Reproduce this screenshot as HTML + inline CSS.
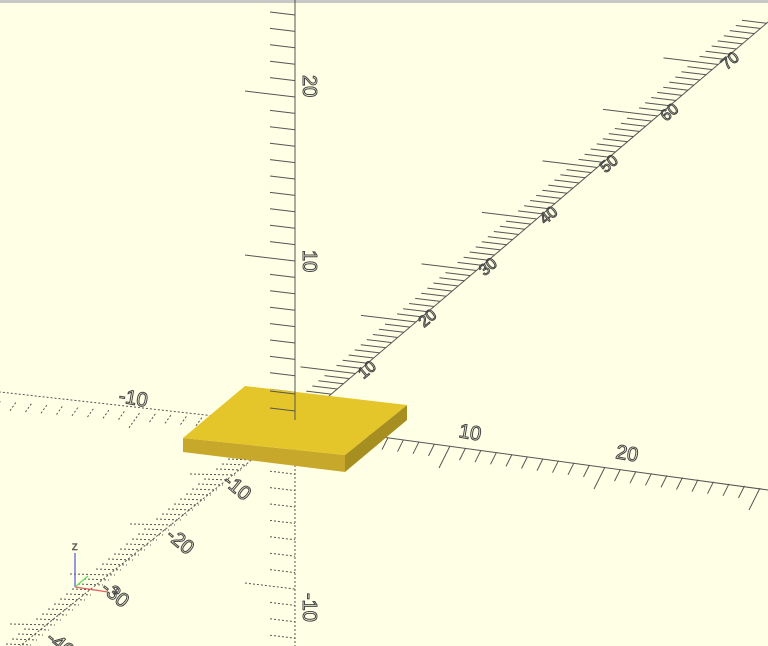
<!DOCTYPE html>
<html><head><meta charset="utf-8"><style>
html,body{margin:0;padding:0;background:#ffffe5;width:768px;height:646px;overflow:hidden}
svg{display:block}
text{font-family:"Liberation Sans",sans-serif;fill:none;stroke:#444;stroke-width:1}
</style></head><body>
<svg id="s" width="768" height="646" viewBox="0 0 768 646" xmlns="http://www.w3.org/2000/svg">
<rect width="768" height="646" fill="#ffffe5"/>
<rect width="768" height="3" fill="#c8c8c8"/>
<g id="ax" stroke="#555" stroke-width="1" fill="none"></g>
<g id="lb"></g>
<polygon points="183,438 345,455 345,472 183,452" fill="#c8a82a"/>
<polygon points="345,455 407,405 407,420 345,472" fill="#a68f20"/>
<polygon points="183,438 245,386 407,405 345,455" fill="#e5c62a"/>
<g stroke="#555" fill="none"><line x1="295" y1="386" x2="295" y2="420"/><line x1="270" y1="391" x2="295" y2="394"/><line x1="270" y1="408" x2="295" y2="411"/></g>
<g stroke-width="1.3">
<line x1="75" y1="587" x2="75" y2="553" stroke="#6060e0"/>
<line x1="75" y1="587" x2="88" y2="576" stroke="#60e060"/>
<line x1="75" y1="587" x2="108" y2="592" stroke="#e06060"/>
</g>
<text x="72" y="550" style="font-size:9px;stroke-width:.6">Z</text>
<text x="113" y="594" style="font-size:8px;stroke-width:.6">X</text>
</svg>
<script>
var NS="http://www.w3.org/2000/svg",ax=document.getElementById('ax'),lb=document.getElementById('lb');
function L(x1,y1,x2,y2,d){var l=document.createElementNS(NS,'line');l.setAttribute('x1',x1);l.setAttribute('y1',y1);l.setAttribute('x2',x2);l.setAttribute('y2',y2);if(d)l.setAttribute('stroke-dasharray','2,2');ax.appendChild(l);}
function T(x,y,r,s,f){var t=document.createElementNS(NS,'text');t.setAttribute('transform','translate('+x+','+y+') rotate('+r+')');t.setAttribute('style','font-size:'+(f||20)+'px');t.textContent=s;lb.appendChild(t);}
// Z axis
L(295,0,295,425);L(295,425,295,646,1);
for(var i=1;i<26;i++){var y=425-i*16.4,len=(i%10==0)?50:25;L(295-len,y-len*0.12,295,y);}
for(var i=1;i<14;i++){var y=425+i*16.4,len=(i%10==0)?50:25;L(295-len,y-len*0.12,295,y,1);}
// X axis
var xd=[15.5,2.1];
L(295,425,768,490);L(295,425,0,392,1);
for(var i=1;i<31;i++){var x=295+i*xd[0],y=425+i*xd[1];if(x<380)continue;var len=(i%10==0)?22:12;L(x-len*0.5,y+len,x,y);}
for(var i=1;i<20;i++){var x=295-i*xd[0],y=425-i*xd[1]*0.6;var len=(i%10==0)?22:12;L(x-len*0.5,y+len*0.7,x,y,1);}
// Y axis
var yd=[6.05,-5.15];
L(295,425,768,22);L(295,425,20,646,1);
for(var i=1;i<80;i++){var x=295+i*yd[0],y=425+i*yd[1];if(x>768)break;if(x<320)continue;var len=(i%10==0)?55:25;L(x-len,y-len*0.12,x,y);}
for(var i=1;i<45;i++){var x=295-i*6.0,y=425+i*5.0;var len=(i%10==0)?45:25;L(x-len,y-1,x,y,1);}
// labels
T(303,75,90,"20");T(303,250,90,"10");T(303,593,90,"-10");
T(118,402,10,"-10");T(458,437,10,"10");T(615,458,10,"20");
for(var k=1;k<=7;k++){var x=295+k*10*yd[0],y=425+k*10*yd[1];T(x+8,y+6,-40,""+k*10+"0".slice(1),16);}
T(222,483,40,"-10");T(165,537,40,"-20");T(100,590,40,"-30");T(45,640,40,"-40");
</script>
</body></html>
